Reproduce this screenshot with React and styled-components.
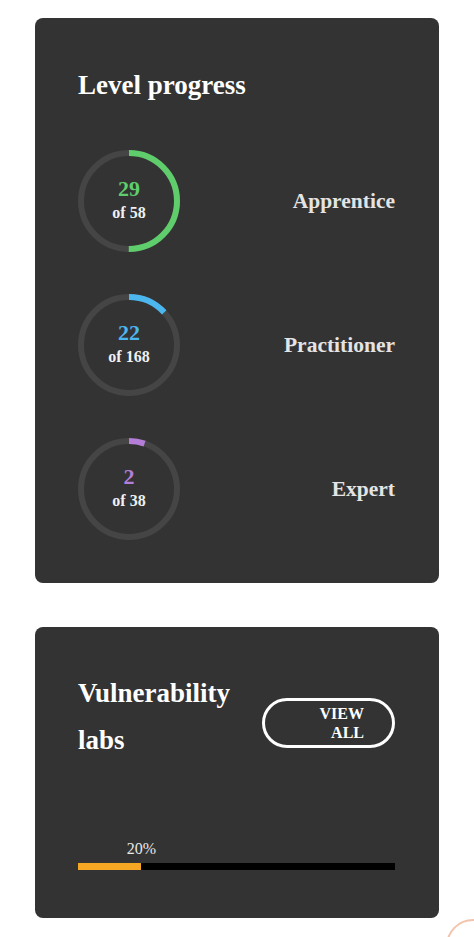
import styled, { createGlobalStyle } from "styled-components";

const GlobalStyle = createGlobalStyle`
  html, body {
    margin: 0;
    padding: 0;
    background: #ffffff;
  }
  body {
    font-family: "Liberation Serif", "Times New Roman", serif;
  }
`;

const Page = styled.main`
  padding: 18px 35px 19px 35px;
  display: flex;
  flex-direction: column;
  gap: 44px;
`;

const Card = styled.section`
  background-color: #333333;
  border-radius: 8px;
  padding: ${(p) => p.$pad};
  display: flex;
  flex-direction: column;
`;

const Title = styled.h2`
  margin: 0;
  color: #ffffff;
  font-size: 27px;
  font-weight: 700;
  line-height: ${(p) => p.$lh || "30px"};
`;

const LevelList = styled.div`
  margin-top: 50px;
  display: flex;
  flex-direction: column;
  gap: 42px;
`;

const LevelRow = styled.div`
  display: flex;
  align-items: center;
  justify-content: space-between;
`;

const Ring = styled.div`
  position: relative;
  width: 102px;
  height: 102px;
`;

const RingText = styled.div`
  position: absolute;
  inset: 0;
  display: flex;
  flex-direction: column;
  align-items: center;
  justify-content: center;
  padding-bottom: 2px;
`;

const Count = styled.span`
  color: ${(p) => p.$color};
  font-size: 22px;
  font-weight: 700;
  line-height: 25px;
`;

const Total = styled.span`
  color: #f0f0f0;
  font-size: 16px;
  font-weight: 700;
  line-height: 24px;
`;

const LevelName = styled.span`
  color: #e4e4e4;
  font-size: 21.5px;
  font-weight: 700;
`;

const LabsHeader = styled.div`
  display: flex;
  justify-content: space-between;
  align-items: flex-start;
`;

const ViewAll = styled.button`
  margin-top: 28px;
  width: 133px;
  height: 50px;
  border: 3px solid #ffffff;
  border-radius: 25px;
  background: transparent;
  color: #ffffff;
  font-family: "Liberation Serif", "Times New Roman", serif;
  font-size: 16px;
  font-weight: 700;
  line-height: 19px;
  text-align: right;
  padding: 0 28px 0 0;
  cursor: pointer;
`;

const ProgressBlock = styled.div`
  margin-top: 76px;
  display: flex;
  flex-direction: column;
`;

const LabelLane = styled.div`
  position: relative;
  height: 18px;
  margin-bottom: 5px;
`;

const ProgressLabel = styled.span`
  position: absolute;
  top: 0;
  color: #e8e8e8;
  font-size: 16px;
  line-height: 18px;
  transform: translateX(-50%);
  white-space: nowrap;
`;

const Track = styled.div`
  height: 7px;
  background: #000000;
`;

const Fill = styled.div`
  height: 100%;
  background: #f5a623;
`;

const Bubble = styled.div`
  position: fixed;
  right: -26px;
  bottom: -36px;
  width: 50px;
  height: 50px;
  border-radius: 50%;
  border: 2px solid #f3c4ad;
  background: #ffffff;
`;

const levels = [
  { name: "Apprentice", done: 29, total: 58, color: "#5fcd6c" },
  { name: "Practitioner", done: 22, total: 168, color: "#4cb6ef" },
  { name: "Expert", done: 2, total: 38, color: "#b47ed8" },
];

const ProgressRing = ({ done, total, color }) => {
  const r = 48;
  const c = 2 * Math.PI * r;
  const len = (done / total) * c;
  return (
    <Ring>
      <svg width="102" height="102" viewBox="0 0 102 102">
        <circle cx="51" cy="51" r={r} fill="none" stroke="#454545" strokeWidth="6" />
        <circle
          cx="51"
          cy="51"
          r={r}
          fill="none"
          stroke={color}
          strokeWidth="6"
          strokeDasharray={`${len} ${c}`}
          transform="rotate(-90 51 51)"
        />
      </svg>
      <RingText>
        <Count $color={color}>{done}</Count>
        <Total>of {total}</Total>
      </RingText>
    </Ring>
  );
};

export default function App() {
  const labsPct = 20;
  return (
    <>
      <GlobalStyle />
      <Page>
        <Card $pad="52px 44px 43px 43px">
          <Title>Level progress</Title>
          <LevelList>
            {levels.map((l) => (
              <LevelRow key={l.name}>
                <ProgressRing done={l.done} total={l.total} color={l.color} />
                <LevelName>{l.name}</LevelName>
              </LevelRow>
            ))}
          </LevelList>
        </Card>

        <Card $pad="43px 44px 48px 43px">
          <LabsHeader>
            <Title $lh="47px">
              Vulnerability
              <br />
              labs
            </Title>
            <ViewAll>
              VIEW
              <br />
              ALL
            </ViewAll>
          </LabsHeader>
          <ProgressBlock>
            <LabelLane>
              <ProgressLabel style={{ left: `${labsPct}%` }}>{labsPct}%</ProgressLabel>
            </LabelLane>
            <Track>
              <Fill style={{ width: `${labsPct}%` }} />
            </Track>
          </ProgressBlock>
        </Card>
      </Page>
      <Bubble />
    </>
  );
}
